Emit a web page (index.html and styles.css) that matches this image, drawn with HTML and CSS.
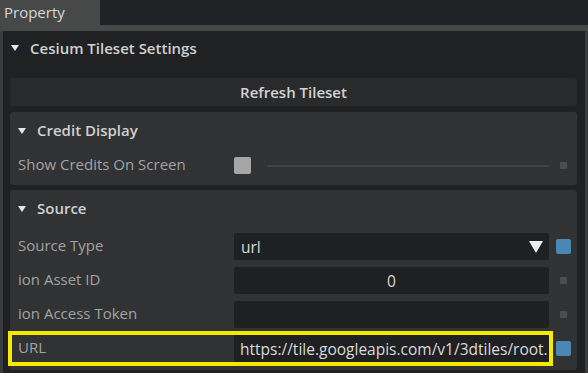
FILE: index.html
```html
<!DOCTYPE html>
<html lang="en">
<head>
  <meta charset="UTF-8" />
  <title>Property</title>
  <link rel="stylesheet" href="styles.css">
</head>
<body>
  <!-- Tab bar -->
  <div class="tabbar">
    <div class="tab">Property</div>
  </div>
  <div class="tab-strip"></div>

  <div class="panel">
    <div class="section-header top">
      <span class="arrow"></span>
      <span>Cesium Tileset Settings</span>
    </div>

    <button class="refresh-btn">Refresh Tileset</button>

    <!-- Credit Display -->
    <div class="frame credit">
      <div class="section-header">
        <span class="arrow"></span>
        <span>Credit Display</span>
      </div>
      <div class="row">
        <div class="row-main">
          <div class="label">Show Credits On Screen</div>
          <div class="slider-cell">
            <span class="checkbox"></span>
            <span class="groove"></span>
          </div>
        </div>
        <div class="indicator"><span class="dot"></span></div>
      </div>
    </div>

    <!-- Source -->
    <div class="frame source">
      <div class="section-header">
        <span class="arrow"></span>
        <span>Source</span>
      </div>
      <div class="row">
        <div class="row-main">
          <div class="label">Source Type</div>
          <div class="field combo">
            <span>url</span>
            <span class="combo-arrow"></span>
          </div>
        </div>
        <div class="indicator"><span class="mark"></span></div>
      </div>
      <div class="row">
        <div class="row-main">
          <div class="label">ion Asset ID</div>
          <div class="field center">0</div>
        </div>
        <div class="indicator"><span class="dot"></span></div>
      </div>
      <div class="row">
        <div class="row-main">
          <div class="label">ion Access Token</div>
          <div class="field"></div>
        </div>
        <div class="indicator"><span class="dot"></span></div>
      </div>
      <div class="row highlight">
        <div class="row-main">
          <div class="label">URL</div>
          <div class="field url">https://tile.googleapis.com/v1/3dtiles/root.</div>
        </div>
        <div class="indicator"><span class="mark"></span></div>
      </div>
    </div>
  </div>
</body>
</html>
```

FILE: styles.css
```css
* {
  margin: 0;
  padding: 0;
  box-sizing: border-box;
  font-family: 'Open Sans', 'Noto Sans', sans-serif;
}

html, body {
  width: 588px;
  height: 373px;
  overflow: hidden;
  background: #1f2123;
  color: #d4d4d4;
}

.tabbar {
  height: 25px;
  background: #1f2124;
  display: flex;
}

.tab {
  width: 100px;
  background: #474848;
  color: #d8d8d8;
  font-size: 15px;
  line-height: 25px;
  padding-left: 4px;
}

.tab-strip {
  height: 6px;
  background: #474848;
}

.panel {
  height: 342px;
  border-left: 3px solid #3a3b3c;
  border-right: 3px solid #3a3b3c;
  padding: 0 8px 0 7px;
  display: flex;
  flex-direction: column;
}

.section-header {
  height: 36px;
  display: flex;
  align-items: center;
  gap: 11px;
  padding-left: 8px;
  font-size: 15px;
  font-weight: 600;
  color: #d0d0d0;
}

.section-header.top {
  height: 33px;
  padding-left: 1px;
}

.arrow {
  width: 0;
  height: 0;
  border-left: 4px solid transparent;
  border-right: 4px solid transparent;
  border-top: 6px solid #e6e6e6;
  margin-top: 1px;
}

.refresh-btn {
  margin-top: 14px;
  height: 28px;
  background: #292a2c;
  border: none;
  border-radius: 3px;
  color: #d2d2d2;
  font-size: 15px;
  font-weight: 600;
}

.frame {
  background: #313233;
  border-radius: 3px;
  display: flex;
  flex-direction: column;
}

.credit {
  margin-top: 6px;
  height: 73px;
}

.credit .row {
  margin-top: 4px;
}

.source {
  margin-top: 5px;
  height: 180px;
  gap: 7px;
}

.row {
  height: 27px;
  display: flex;
}

.row-main {
  margin-left: 2px;
  padding-left: 6px;
  width: 537px;
  display: flex;
  align-items: center;
}

.label {
  width: 216px;
  font-size: 15px;
  color: #a2a3a3;
  margin-top: -3px;
}

.field {
  width: 315px;
  height: 27px;
  background: #1f2022;
  border-radius: 2px;
  color: #dadada;
  font-size: 15.5px;
  display: flex;
  align-items: center;
  padding-left: 7px;
  white-space: nowrap;
  overflow: hidden;
}

.field.center {
  justify-content: center;
  padding-left: 0;
}

.combo {
  justify-content: space-between;
  padding-right: 6px;
}

.combo-arrow {
  width: 0;
  height: 0;
  border-left: 7px solid transparent;
  border-right: 7px solid transparent;
  border-top: 12px solid #ececec;
}

.url {
  padding-left: 6px;
}

.highlight .row-main {
  outline: 4px solid #f6ea00;
}

.slider-cell {
  width: 315px;
  display: flex;
  align-items: center;
}

.checkbox {
  width: 17px;
  height: 17px;
  background: #a6a6a6;
  border-radius: 2px;
}

.groove {
  margin-left: 16px;
  width: 285px;
  height: 2px;
  background: #404243;
  border-radius: 1px;
}

.indicator {
  flex: 1;
  display: flex;
  align-items: center;
  justify-content: center;
}

.dot {
  width: 7px;
  height: 7px;
  background: #4c4d4e;
  border-radius: 1px;
}

.mark {
  width: 15px;
  height: 15px;
  background: #4b87b5;
  border-radius: 2px;
}
```
